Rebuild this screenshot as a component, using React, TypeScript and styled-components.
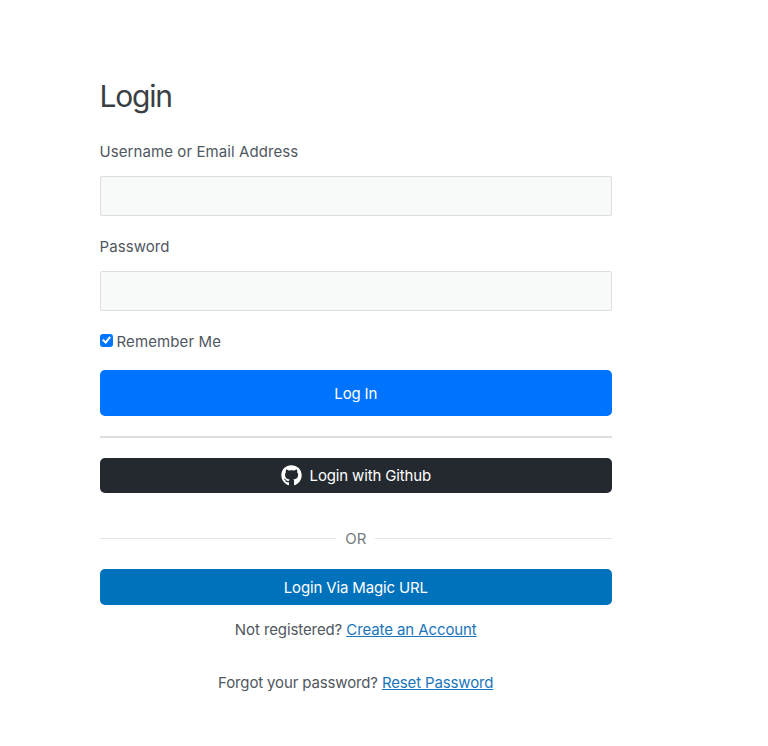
import React from 'react';
import styled, { createGlobalStyle } from 'styled-components';
import { FaGithub } from 'react-icons/fa';

const GlobalStyle = createGlobalStyle`
  html, body {
    margin: 0;
    padding: 0;
    background: #fff;
  }
  * {
    box-sizing: border-box;
  }
`;

export default function App() {
  return (
    <>
      <GlobalStyle />
      <Page>
        <Title>Login</Title>
        <Field>
          <Label>Username or Email Address</Label>
          <Input type="text" />
        </Field>
        <Field>
          <Label>Password</Label>
          <Input type="password" />
        </Field>
        <Remember>
          <Check type="checkbox" defaultChecked />
          Remember Me
        </Remember>
        <SubmitButton>Log In</SubmitButton>
        <Rule />
        <GithubButton>
          <FaGithub size={21} />
          Login with Github
        </GithubButton>
        <OrRow>
          <OrLine />
          <OrText>OR</OrText>
          <OrLine />
        </OrRow>
        <MagicButton>Login Via Magic URL</MagicButton>
        <RegisterNote>
          Not registered? <NoteLink href="#">Create an Account</NoteLink>
        </RegisterNote>
        <ForgotNote>
          Forgot your password? <NoteLink href="#">Reset Password</NoteLink>
        </ForgotNote>
      </Page>
    </>
  );
}

const Page = styled.main`
  display: flex;
  flex-direction: column;
  width: 768px;
  height: 746px;
  padding: 77px 156px 0 99.5px;
  font-family: Inter, "Liberation Sans", sans-serif;
  font-size: 15px;
  color: #50575e;
`;

const Title = styled.h1`
  margin: 0 0 26px;
  font-size: 30px;
  line-height: 38px;
  font-weight: 400;
  letter-spacing: -1.2px;
  color: #3a3f44;
`;

const Field = styled.div`
  display: flex;
  flex-direction: column;
  margin-bottom: 20px;
`;

const Label = styled.label`
  margin-bottom: 13px;
  font-size: 15px;
  line-height: 22px;
  letter-spacing: 0.08px;
`;

const Input = styled.input`
  width: 100%;
  height: 40px;
  padding: 0 12px;
  border: 1px solid #dcdfe1;
  border-radius: 2px;
  background: #f8f9f9;
  outline: none;
`;

const Remember = styled.label`
  display: flex;
  align-items: center;
  gap: 4px;
  height: 20px;
  margin-bottom: 19px;
  letter-spacing: 0.12px;
`;

const Check = styled.input`
  position: relative;
  appearance: none;
  width: 13px;
  height: 13px;
  margin: 0 0 2px;
  border-radius: 3px;
  background: #0075ff;

  &::after {
    content: "";
    position: absolute;
    left: 4px;
    top: 1.5px;
    width: 5px;
    height: 8px;
    border: solid #fff;
    border-width: 0 2px 2px 0;
    transform: rotate(40deg);
    box-sizing: border-box;
  }
`;

const Button = styled.button`
  display: flex;
  align-items: center;
  justify-content: center;
  width: 100%;
  border: 0;
  border-radius: 5px;
  color: #fff;
  font-family: inherit;
  font-size: 15px;
  letter-spacing: -0.15px;
`;

const SubmitButton = styled(Button)`
  height: 46px;
  background: #0074ff;
`;

const Rule = styled.hr`
  width: 100%;
  height: 2px;
  margin: 20px 0;
  border: 0;
  background: #dedfe0;
`;

const GithubButton = styled(Button)`
  gap: 8px;
  height: 35px;
  background: #24292f;
`;

const OrRow = styled.div`
  display: flex;
  align-items: center;
  gap: 9px;
  height: 22px;
  margin: 34px 0 20px;
`;

const OrLine = styled.span`
  flex: 1;
  height: 1px;
  background: #e2e4e6;
`;

const OrText = styled.span`
  font-size: 15px;
  color: #767b80;
`;

const MagicButton = styled(Button)`
  height: 36px;
  background: #0071bb;
`;

const RegisterNote = styled.p`
  margin: 14px 0 0;
  line-height: 22px;
  letter-spacing: -0.1px;
  text-align: center;
`;

const ForgotNote = styled(RegisterNote)`
  margin-top: 31px;
  letter-spacing: -0.14px;
`;

const NoteLink = styled.a`
  color: #1a75bb;
  text-decoration: underline;
`;
